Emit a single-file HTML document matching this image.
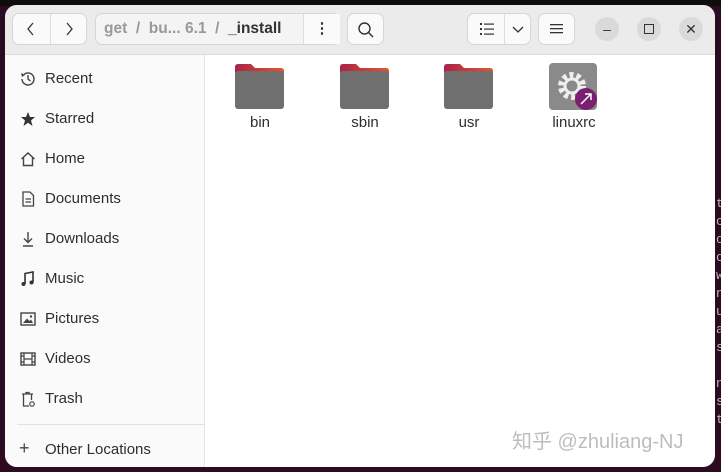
<!DOCTYPE html>
<html><head><style>
body{margin:0;width:721px;height:472px;background:#2c0a22;position:relative;overflow:hidden;font-family:"Liberation Sans",sans-serif;}
.top{position:absolute;left:0;top:0;width:721px;height:6px;background:#0d0d0d}
.win{position:absolute;left:5px;top:5px;width:710px;height:462px;background:#fff;border-radius:12px;overflow:hidden}
.hdr{position:absolute;left:0;top:0;width:710px;height:49px;background:#ebebeb;border-bottom:1px solid #dcdcdc}
.btn{position:absolute;top:8px;height:32px;background:#fafafa;border:1px solid #d6d6d6;border-radius:7px;box-sizing:border-box;color:#333;font-size:15px}
.side{position:absolute;left:0;top:50px;width:199px;height:412px;background:#fafafa;border-right:1px solid #e4e4e4}
.it{position:absolute;left:40px;font-size:15px;color:#2e2e2e}
.ic{position:absolute;left:14px;width:18px;height:18px}
.lab{position:absolute;top:109px;font-size:15px;color:#2e2e2e;width:80px;text-align:center}
.circ{position:absolute;top:12px;width:24px;height:24px;border-radius:50%;background:#dadada;text-align:center;line-height:24px;color:#333;font-size:14px}
</style></head><body>
<div class="top"></div>
<div style="position:absolute;left:716px;top:195px;font:13px 'Liberation Mono',monospace;color:#bbb;line-height:18px">t<br>c<br>o<br>o<br>w<br>n<br>u<br>a<br>s<br><br>n<br>s<br>t</div>
<div class="win">
<div class="hdr">
 <div class="btn" style="left:7px;width:75px"><div style="position:absolute;left:37px;top:0;width:1px;height:30px;background:#ddd"></div>
  <svg style="position:absolute;left:11px;top:7px" width="14" height="16"><path d="M9 2 L4 8 L9 14" stroke="#333" stroke-width="1.3" fill="none"/></svg>
  <svg style="position:absolute;left:49px;top:7px" width="14" height="16"><path d="M5 2 L10 8 L5 14" stroke="#333" stroke-width="1.3" fill="none"/></svg></div>
 <div class="btn" style="left:90px;width:245px;background:#f4f4f4"><div style="position:absolute;left:8px;top:6px;white-space:nowrap;font-weight:bold;color:#999;font-size:15.5px">get &nbsp;/ &nbsp;bu... 6.1 &nbsp;/ &nbsp;<span style="color:#333">_install</span></div>
  <div style="position:absolute;left:207px;top:0;width:36px;height:30px;border-left:1px solid #ddd;background:#fafafa;text-align:center;line-height:30px;font-weight:bold">⋮</div></div>
 <div class="btn" style="left:342px;width:37px"><svg style="position:absolute;left:9px;top:7px" width="18" height="18"><circle cx="7.5" cy="7.5" r="5.5" stroke="#333" stroke-width="1.4" fill="none"/><path d="M11.5 11.5 L16 16" stroke="#333" stroke-width="1.5"/></svg></div>
 <div class="btn" style="left:462px;width:64px"><div style="position:absolute;left:36px;top:0;width:1px;height:30px;background:#ddd"></div>
  <svg style="position:absolute;left:11px;top:8px" width="16" height="14"><g fill="#333"><rect x="1" y="1" width="2" height="2"/><rect x="1" y="6" width="2" height="2"/><rect x="1" y="11" width="2" height="2"/><rect x="5" y="1.5" width="10" height="1.2"/><rect x="5" y="6.5" width="10" height="1.2"/><rect x="5" y="11.5" width="10" height="1.2"/></g></svg>
  <svg style="position:absolute;left:43px;top:10px" width="14" height="10"><path d="M2 3 L7 8 L12 3" stroke="#333" stroke-width="1.3" fill="none"/></svg></div>
 <div class="btn" style="left:533px;width:37px"><svg style="position:absolute;left:11px;top:9px" width="14" height="12"><g fill="#333"><rect x="0" y="1" width="13" height="1.3"/><rect x="0" y="5" width="13" height="1.3"/><rect x="0" y="9" width="13" height="1.3"/></g></svg></div>
 <div class="circ" style="left:590px">–</div>
 <div class="circ" style="left:632px"><div style="position:absolute;left:7px;top:7px;width:8px;height:8px;border:1.3px solid #333"></div></div>
 <div class="circ" style="left:674px">✕</div>
</div>
<div class="side">
 <div style="position:absolute;left:0;top:15px;width:199px">
  <svg class="ic" style="top:0" viewBox="0 0 18 18"><path d="M3 9 A6 6 0 1 0 5 4.5" stroke="#444" stroke-width="1.4" fill="none"/><path d="M2 3 L3 7 L6 5" fill="#444"/><path d="M9 5 V9 L11.5 11" stroke="#444" stroke-width="1.4" fill="none"/></svg>
  <div class="it" style="top:0">Recent</div>
  <svg class="ic" style="top:40px" viewBox="0 0 18 18"><path d="M9 2 L11 7 L16 7 L12 10.5 L13.5 16 L9 12.8 L4.5 16 L6 10.5 L2 7 L7 7 Z" fill="#333"/></svg>
  <div class="it" style="top:40px">Starred</div>
  <svg class="ic" style="top:80px" viewBox="0 0 18 18"><path d="M2.5 9 L9 3 L15.5 9 M4.5 7.5 V15.5 H13.5 V7.5" stroke="#444" stroke-width="1.4" fill="none"/></svg>
  <div class="it" style="top:80px">Home</div>
  <svg class="ic" style="top:120px" viewBox="0 0 18 18"><path d="M4 2 H11 L14.5 5.5 V16 H4 Z M6.5 9 H12 M6.5 12 H12" stroke="#444" stroke-width="1.3" fill="none"/></svg>
  <div class="it" style="top:120px">Documents</div>
  <svg class="ic" style="top:160px" viewBox="0 0 18 18"><path d="M9 2 V12 M5 8.5 L9 12.5 L13 8.5 M4 16 H14" stroke="#444" stroke-width="1.4" fill="none"/></svg>
  <div class="it" style="top:160px">Downloads</div>
  <svg class="ic" style="top:200px" viewBox="0 0 18 18"><path d="M6 14 V3.5 L14 2 V12.5" stroke="#333" stroke-width="1.6" fill="none"/><circle cx="4.5" cy="14" r="2" fill="#333"/><circle cx="12.5" cy="12.5" r="2" fill="#333"/></svg>
  <div class="it" style="top:200px">Music</div>
  <svg class="ic" style="top:240px" viewBox="0 0 18 18"><rect x="2" y="3" width="14" height="12" stroke="#444" stroke-width="1.4" fill="none"/><path d="M4 13 L8 8.5 L10.5 11 L12 9.5 L14 13 Z" fill="#444"/><circle cx="12" cy="6.5" r="1.2" fill="#444"/></svg>
  <div class="it" style="top:240px">Pictures</div>
  <svg class="ic" style="top:280px" viewBox="0 0 18 18"><rect x="2" y="3" width="14" height="12" stroke="#444" stroke-width="1.4" fill="none"/><path d="M5 3 V15 M13 3 V15 M5 9 H13 M2 6 H5 M2 12 H5 M13 6 H16 M13 12 H16" stroke="#444" stroke-width="1.2"/></svg>
  <div class="it" style="top:280px">Videos</div>
  <svg class="ic" style="top:320px" viewBox="0 0 18 18"><path d="M3 4 H14 M7 4 V2.5 H10 V4 M4.5 4 V16 H10 M12.5 4 V10" stroke="#444" stroke-width="1.3" fill="none"/><circle cx="13" cy="14" r="2.2" stroke="#444" stroke-width="1.2" fill="none"/></svg>
  <div class="it" style="top:320px">Trash</div>
 </div>
 <div style="position:absolute;left:12px;top:369px;width:187px;height:1px;background:#e2e2e2"></div>
 <div style="position:absolute;left:14px;top:383px;font-size:18px;color:#444">+</div>
 <div class="it" style="top:386px">Other Locations</div>
</div>
<svg style="position:absolute;left:0;top:0" width="710" height="120">
 <defs><linearGradient id="t" x1="0" x2="1"><stop offset="0" stop-color="#a8234a"/><stop offset="1" stop-color="#e2582a"/></linearGradient></defs>
 <g id="f"><path d="M230 62 Q230 59 233 59 H246 L250 63 H276 Q279 63 279 66 V72 H230Z" fill="url(#t)"/><rect x="230" y="66" width="49" height="38" rx="3" fill="#6f6f6f"/></g>
 <use href="#f" x="105"/><use href="#f" x="209"/>
 <rect x="544" y="58" width="48" height="47" rx="4" fill="#8a8a8a"/>
 <circle cx="567" cy="81" r="11" fill="none" stroke="#eee" stroke-width="6" stroke-dasharray="4 3"/>
 <circle cx="567" cy="81" r="7" fill="none" stroke="#eee" stroke-width="3"/>
 <circle cx="581" cy="94" r="11" fill="#7a1f6f"/>
 <path d="M576 99 L586 89 M580 89 H586 V95" stroke="#fff" stroke-width="1.5" fill="none"/>
</svg>
<div class="lab" style="left:215px">bin</div>
<div class="lab" style="left:320px">sbin</div>
<div class="lab" style="left:424px">usr</div>
<div class="lab" style="left:529px">linuxrc</div>
<div style="position:absolute;left:507px;top:420px;font-size:20px;color:#bdbdbd;white-space:nowrap;font-family:'Liberation Sans','Noto Sans CJK SC',sans-serif">知乎 @zhuliang-NJ</div>
</div>
</body></html>
